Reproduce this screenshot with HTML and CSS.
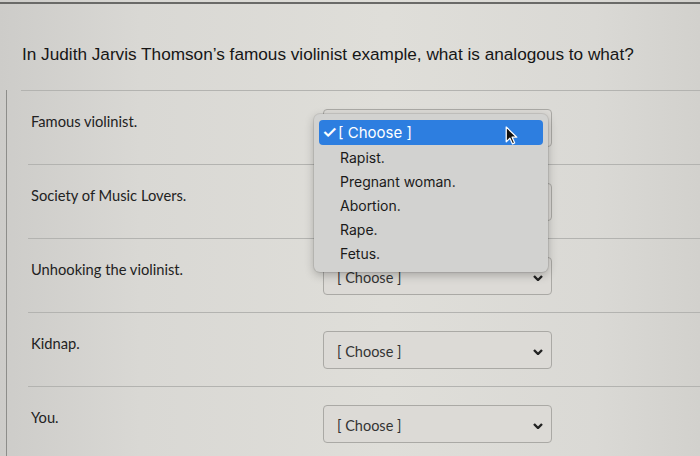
FILE: index.html
```html
<!DOCTYPE html>
<html>
<head>
<meta charset="utf-8">
<link rel="stylesheet" href="styles.css">
</head>
<body>
<div class="page">
  <div class="topline"></div>
  <div class="question">In Judith Jarvis Thomson’s famous violinist example, what is analogous to what?</div>
  <div class="body">
    <div class="rule"></div>
    <div class="row">
      <div class="label">Famous violinist.</div>
      <div class="select"><span>[ Choose ]</span><svg class="chev" viewBox="0 0 10 6"><path d="M1 1 L5 5 L9 1" /></svg></div>
    </div>
    <div class="row">
      <div class="label">Society of Music Lovers.</div>
      <div class="select"><span>[ Choose ]</span><svg class="chev" viewBox="0 0 10 6"><path d="M1 1 L5 5 L9 1" /></svg></div>
    </div>
    <div class="row">
      <div class="label">Unhooking the violinist.</div>
      <div class="select"><span>[ Choose ]</span><svg class="chev" viewBox="0 0 10 6"><path d="M1 1 L5 5 L9 1" /></svg></div>
    </div>
    <div class="row">
      <div class="label">Kidnap.</div>
      <div class="select"><span>[ Choose ]</span><svg class="chev" viewBox="0 0 10 6"><path d="M1 1 L5 5 L9 1" /></svg></div>
    </div>
    <div class="row last">
      <div class="label">You.</div>
      <div class="select"><span>[ Choose ]</span><svg class="chev" viewBox="0 0 10 6"><path d="M1 1 L5 5 L9 1" /></svg></div>
    </div>
  </div>

  <div class="menu">
    <div class="item selected"><span class="check">✓</span>[ Choose ]</div>
    <div class="item">Rapist.</div>
    <div class="item">Pregnant woman.</div>
    <div class="item">Abortion.</div>
    <div class="item">Rape.</div>
    <div class="item">Fetus.</div>
  </div>
  <svg class="cursor" viewBox="0 0 12 18"><path d="M1 1 L1 15 L4.5 11.5 L7 17 L9 16 L6.6 10.6 L11 10.6 Z" fill="#111" stroke="#fff" stroke-width="1.2" stroke-linejoin="round"/></svg>
</div>
</body>
</html>
```

FILE: styles.css
```css
html, body {
  margin: 0;
  padding: 0;
}
body {
  width: 700px;
  height: 456px;
  overflow: hidden;
  background: linear-gradient(90deg, #cdccc9 0%, #d9d8d4 20%, #dfded9 55%, #dad9d5 85%, #d2d1cd 100%);
  font-family: "Lato", "Liberation Sans", sans-serif;
}
.page {
  position: relative;
  height: 456px;
}
.topline {
  height: 2px;
  margin-top: 2px;
  background: #6a6a68;
}
.question {
  font-family: "Liberation Sans", Arial, sans-serif;
  font-size: 17.2px;
  line-height: 20px;
  color: #161616;
  padding: 40px 0 0 22px;
  height: 46px;
}
.body {
  margin-left: 6px;
  border-left: 1px solid #8d8d8a;
  padding-left: 14px;
}
.rule {
  height: 1px;
  background: #b3b3b0;
}
.row {
  display: flex;
  align-items: flex-start;
  height: 73px;
  border-bottom: 1px solid #b3b3b0;
  margin-left: 7px;
}
.row.last {
  border-bottom: none;
  height: 74px;
}
.label {
  width: 292px;
  padding: 21px 0 0 3px;
  font-size: 14.7px;
  line-height: 18px;
  color: #222;
}
.select {
  margin-top: 18px;
  width: 229px;
  height: 38px;
  box-sizing: border-box;
  border: 1px solid #aaa9a5;
  border-radius: 4px;
  background: #dcdad6;
  display: flex;
  align-items: center;
  justify-content: space-between;
  padding: 3px 8px 0 13px;
  font-size: 14.5px;
  color: #333;
}
.chev {
  width: 10px;
  height: 6px;
  fill: none;
  stroke: #222;
  stroke-width: 2.4;
}
.menu {
  position: absolute;
  left: 314px;
  top: 112px;
  width: 234px;
  height: 158px;
  box-sizing: border-box;
  padding: 6px 5px;
  background: #d2d2d0;
  border-radius: 6px;
  box-shadow: 0 3px 10px rgba(0,0,0,0.25), 0 0 0 1px rgba(0,0,0,0.08);
  font-family: "Inter", "Liberation Sans", sans-serif;
  font-size: 14px;
  color: #1a1a1a;
}
.item {
  height: 24px;
  line-height: 24px;
  padding-left: 21px;
}
.item.selected {
  background: #2d7ee0;
  color: #fff;
  border-radius: 4px;
  height: 25px;
  line-height: 25px;
  padding-left: 3px;
  margin-bottom: 1px;
  font-size: 15px;
}
.check {
  display: inline-block;
  width: 16px;
  font-size: 17px;
  font-weight: 600;
}
.cursor {
  position: absolute;
  left: 505px;
  top: 124px;
  width: 13px;
  height: 19px;
}
```
